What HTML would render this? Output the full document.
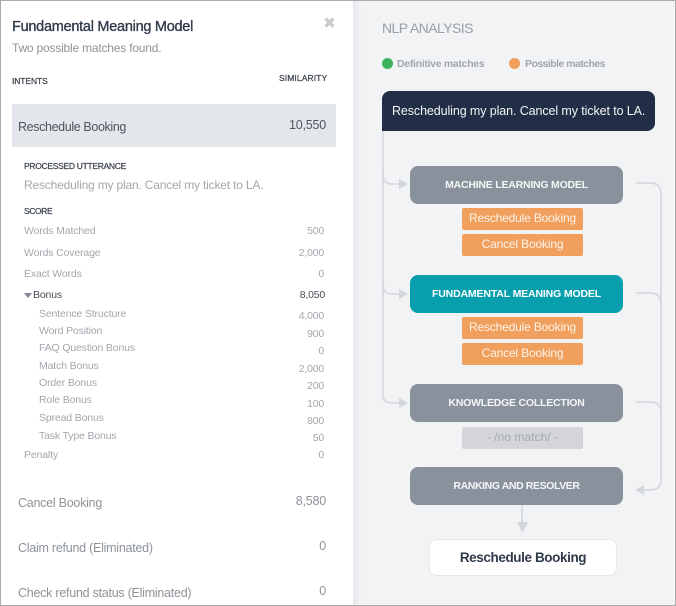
<!DOCTYPE html>
<html><head><meta charset="utf-8"><style>
html,body{margin:0;padding:0}
body{width:676px;height:606px;position:relative;overflow:hidden;background:#f2f3f5;font-family:"Liberation Sans",sans-serif}
.t{position:absolute;white-space:nowrap;line-height:20px;height:20px}
.row{font-size:10.5px;color:#a2a7ad;letter-spacing:-.15px;margin-top:1px}
.rv{font-size:10.5px;color:#a2a7ad;right:352px;letter-spacing:-.2px;margin-top:1px}
.h{font-size:8.5px;color:#3e4650;letter-spacing:-.1px;-webkit-text-stroke:.25px #3e4650}
.big{font-size:12.5px;color:#8d9399;letter-spacing:-.25px}
.bv{font-size:12.5px;color:#8d9399;right:350px;letter-spacing:-.2px}
.b{position:absolute;left:410px;width:213px;height:38px;border-radius:8px;background:#89929c;color:#f5f6f7;font-size:10.5px;font-weight:bold;text-align:center;line-height:39px;letter-spacing:-.22px}
.o{position:absolute;left:462px;width:121px;height:22px;border-radius:2px;background:#f0a05c;color:#fdf3ea;font-size:12px;text-align:center;line-height:21px;letter-spacing:-.17px}
</style></head><body>
<div style="position:absolute;left:0;top:0;width:353px;height:606px;background:#fff"></div>
<div style="position:absolute;left:353px;top:0;width:8px;height:606px;background:linear-gradient(90deg,#e6e8eb,#f2f3f5)"></div>

<div class="t" style="left:12px;top:17px;font-size:14.5px;color:#2f3a4a;letter-spacing:-.27px;-webkit-text-stroke:.35px #2f3a4a">Fundamental Meaning Model</div>
<div class="t" style="left:12px;top:38px;font-size:12px;color:#8d9399;letter-spacing:-.2px">Two possible matches found.</div>
<svg style="position:absolute;left:323px;top:16px" width="13" height="13" viewBox="0 0 13 13"><path d="M2.500 2.500L10.500 10.500M10.500 2.500L2.500 10.500" stroke="#c9ccd0" stroke-width="3.500" fill="none"/></svg>
<div class="t h" style="left:12px;top:71px">INTENTS</div>
<div class="t h" style="left:279px;top:68px;letter-spacing:.1px">SIMILARITY</div>

<div style="position:absolute;left:12px;top:104px;width:324px;height:43px;background:#e3e6ea"></div>
<div class="t" style="left:18px;top:117px;font-size:12.5px;color:#4d5661;letter-spacing:-.37px">Reschedule Booking</div>
<div class="t" style="right:350px;top:115px;font-size:12.5px;color:#4d5661;letter-spacing:-.2px">10,550</div>

<div class="t h" style="left:24px;top:156px;letter-spacing:-.3px">PROCESSED UTTERANCE</div>
<div class="t" style="left:24px;top:175px;font-size:12px;color:#a2a7ad;letter-spacing:-.18px">Rescheduling my plan. Cancel my ticket to LA.</div>
<div class="t h" style="left:24px;top:201px;letter-spacing:-.4px">SCORE</div>

<div class="t row" style="left:24px;top:220px">Words Matched</div><div class="t rv" style="top:220px">500</div>
<div class="t row" style="left:24px;top:242px">Words Coverage</div><div class="t rv" style="top:242px">2,000</div>
<div class="t row" style="left:24px;top:263px">Exact Words</div><div class="t rv" style="top:263px">0</div>
<svg style="position:absolute;left:24px;top:293px" width="8" height="6"><path d="M0 0H8L4 5Z" fill="#7f868e"/></svg>
<div class="t row" style="left:33px;top:284px;color:#454e59">Bonus</div><div class="t rv" style="top:284px;right:351px;color:#454e59">8,050</div>
<div class="t row" style="left:39px;top:303px">Sentence Structure</div><div class="t rv" style="top:305px">4,000</div>
<div class="t row" style="left:39px;top:320px">Word Position</div><div class="t rv" style="top:323px">900</div>
<div class="t row" style="left:39px;top:337px">FAQ Question Bonus</div><div class="t rv" style="top:340px">0</div>
<div class="t row" style="left:39px;top:355px">Match Bonus</div><div class="t rv" style="top:358px">2,000</div>
<div class="t row" style="left:39px;top:372px">Order Bonus</div><div class="t rv" style="top:375px">200</div>
<div class="t row" style="left:39px;top:389px">Role Bonus</div><div class="t rv" style="top:393px">100</div>
<div class="t row" style="left:39px;top:407px">Spread Bonus</div><div class="t rv" style="top:410px">800</div>
<div class="t row" style="left:39px;top:425px">Task Type Bonus</div><div class="t rv" style="top:427px">50</div>
<div class="t row" style="left:24px;top:444px">Penalty</div><div class="t rv" style="top:444px">0</div>

<div class="t big" style="left:18px;top:493px">Cancel Booking</div><div class="t bv" style="top:491px">8,580</div>
<div class="t big" style="left:18px;top:538px">Claim refund (Eliminated)</div><div class="t bv" style="top:536px">0</div>
<div class="t big" style="left:18px;top:583px">Check refund status (Eliminated)</div><div class="t bv" style="top:581px">0</div>

<div class="t" style="left:382px;top:18px;font-size:14px;color:#99a0a8;letter-spacing:-.55px">NLP ANALYSIS</div>
<div style="position:absolute;left:382px;top:58px;width:11px;height:11px;border-radius:50%;background:#3db35b"></div>
<div class="t" style="left:397px;top:54px;font-size:10.5px;font-weight:bold;color:#a2a7ad;letter-spacing:-.3px">Definitive matches</div>
<div style="position:absolute;left:509px;top:58px;width:11px;height:11px;border-radius:50%;background:#f0a05c"></div>
<div class="t" style="left:525px;top:54px;font-size:10.5px;font-weight:bold;color:#a2a7ad;letter-spacing:-.55px">Possible matches</div>

<svg style="position:absolute;left:0;top:0" width="676" height="606" fill="none" stroke="#d3d6da" stroke-width="1.500">
<path d="M383 125V395Q383 403 392 403H399"/>
<path d="M383 174Q383 184 392 184H399"/>
<path d="M383 284Q383 294 392 294H399"/>
<path d="M636 183H650Q661 183 661 194V480Q661 490 650 490H643"/>
<path d="M636 293H650Q661 293 661 304"/>
<path d="M636 402H650Q661 402 661 413"/>
<path d="M522 505V523"/>
<g fill="#d3d6da" stroke="none">
<path d="M399 179L408 184L399 189Z"/>
<path d="M399 289L408 294L399 299Z"/>
<path d="M399 398L408 403L399 408Z"/>
<path d="M644 485L635 490L644 495Z"/>
<path d="M517 522H528L522.500 533Z"/>
</g>
</svg>

<div style="position:absolute;left:382px;top:91px;width:273px;height:40px;border-radius:8px 8px 8px 0;background:#212e45"></div>
<div class="t" style="left:392px;top:101px;font-size:12.5px;color:#f3f4f6;letter-spacing:-.1px">Rescheduling my plan. Cancel my ticket to LA.</div>

<div class="b" style="top:166px">MACHINE LEARNING MODEL</div>
<div class="o" style="top:208px">Reschedule Booking</div>
<div class="o" style="top:234px">Cancel Booking</div>
<div class="b" style="top:275px;background:#079fae;color:#fff;letter-spacing:-.15px">FUNDAMENTAL MEANING MODEL</div>
<div class="o" style="top:317px">Reschedule Booking</div>
<div class="o" style="top:343px">Cancel Booking</div>
<div class="b" style="top:384px">KNOWLEDGE COLLECTION</div>
<div class="o" style="top:427px;background:#d3d5d8;color:#a5a9ae;letter-spacing:.05px">- /no match/ -</div>
<div class="b" style="top:467px;letter-spacing:-.4px">RANKING AND RESOLVER</div>
<div style="position:absolute;left:429px;top:539px;width:186px;height:35px;border:1px solid #e6e8eb;border-radius:8px;background:#fff;color:#2f3a4a;font-size:13.5px;font-weight:bold;text-align:center;line-height:35px;letter-spacing:-.4px">Reschedule Booking</div>

<div style="position:absolute;left:0;top:0;width:676px;height:1px;background:#a9abad"></div>
<div style="position:absolute;left:0;top:605px;width:676px;height:1px;background:#a9abad"></div>
<div style="position:absolute;left:0;top:0;width:1px;height:606px;background:#a9abad"></div>
<div style="position:absolute;left:675px;top:0;width:1px;height:606px;background:#a9abad"></div>
</body></html>
